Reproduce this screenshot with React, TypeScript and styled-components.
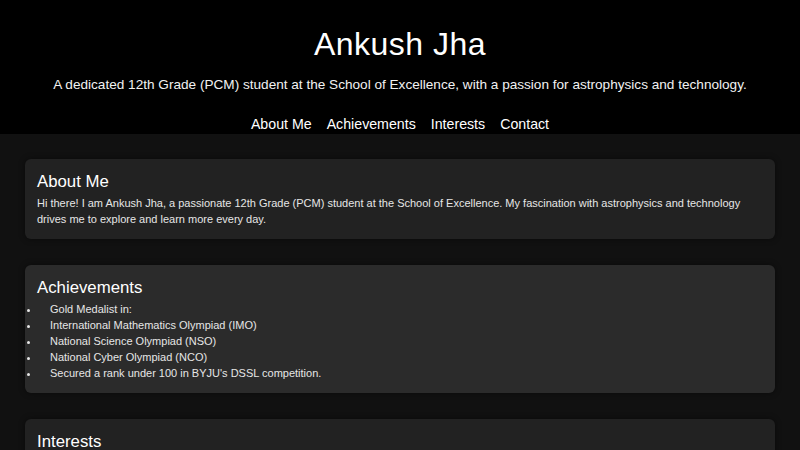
import React from "react";
import styled, { createGlobalStyle } from "styled-components";

const Global = createGlobalStyle`
  html, body { margin: 0; padding: 0; background: #111111; }
  body { font-family: "Liberation Sans", Arial, sans-serif; color: #ffffff; }
  * { box-sizing: border-box; }
`;

const Header = styled.header`
  background: #000000;
  text-align: center;
  padding: 26px 20px 0;
  height: 134px;
`;

const Title = styled.h1`
  margin: 0;
  font-size: 32px;
  line-height: 36px;
  font-weight: 500;
  letter-spacing: 0.5px;
`;

const Tagline = styled.p`
  margin: 14px 0 0;
  font-size: 13.6px;
  line-height: 18px;
  color: #f2f2f2;
`;

const Nav = styled.nav`
  display: flex;
  justify-content: center;
  gap: 15px;
  margin-top: 20px;
`;

const NavLink = styled.a`
  color: #ffffff;
  text-decoration: none;
  font-size: 14.2px;
  line-height: 20px;
`;

const Main = styled.main`
  display: flex;
  flex-direction: column;
  gap: 26px;
  padding: 25px 25px;
`;

const Card = styled.section<{ $tone?: string }>`
  background: ${(p) => p.$tone ?? "#222222"};
  border-radius: 6px;
  padding: 12px;
  box-shadow: 0 0 6px rgba(0, 0, 0, 0.45);
`;

const Heading = styled.h2`
  margin: 0 0 3px;
  font-size: 16.8px;
  line-height: 21px;
  font-weight: 500;
`;

const Text = styled.p`
  margin: 0;
  font-size: 11px;
  line-height: 16px;
  color: #e6e6e6;
`;

const List = styled.ul`
  margin: 0 0 0 -12px;
  padding: 0 0 0 15px;
  font-size: 11px;
  line-height: 16px;
  color: #e6e6e6;
`;

const Item = styled.li`
  padding-left: 10px;
`;

const achievements = [
  "Gold Medalist in:",
  "International Mathematics Olympiad (IMO)",
  "National Science Olympiad (NSO)",
  "National Cyber Olympiad (NCO)",
  "Secured a rank under 100 in BYJU's DSSL competition.",
];

export default function App() {
  return (
    <>
      <Global />
      <Header>
        <Title>Ankush Jha</Title>
        <Tagline>
          A dedicated 12th Grade (PCM) student at the School of Excellence, with a passion for astrophysics and technology.
        </Tagline>
        <Nav>
          <NavLink href="#about">About Me</NavLink>
          <NavLink href="#achievements">Achievements</NavLink>
          <NavLink href="#interests">Interests</NavLink>
          <NavLink href="#contact">Contact</NavLink>
        </Nav>
      </Header>
      <Main>
        <Card id="about">
          <Heading>About Me</Heading>
          <Text>
            Hi there! I am Ankush Jha, a passionate 12th Grade (PCM) student at the School of Excellence. My fascination with astrophysics and technology drives me to explore and learn more every day.
          </Text>
        </Card>
        <Card id="achievements" $tone="#2b2b2b">
          <Heading>Achievements</Heading>
          <List>
            {achievements.map((a) => (
              <Item key={a}>{a}</Item>
            ))}
          </List>
        </Card>
        <Card id="interests">
          <Heading>Interests</Heading>
          <Text>
            Astrophysics, coding, and exploring new technologies.
          </Text>
        </Card>
      </Main>
    </>
  );
}
